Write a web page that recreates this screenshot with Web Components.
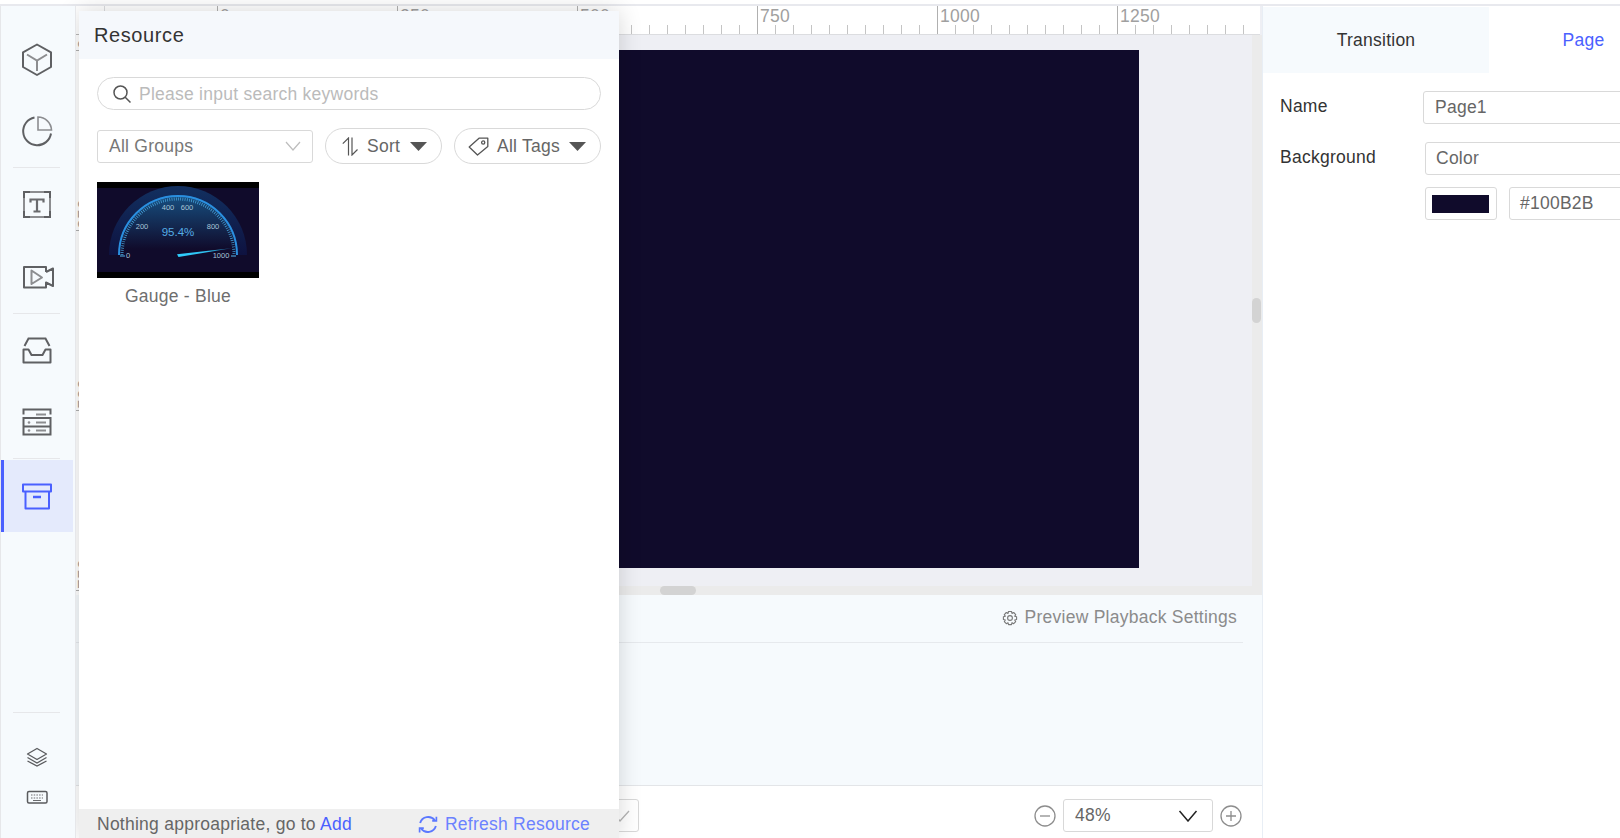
<!DOCTYPE html>
<html><head><meta charset="utf-8"><title>Resource</title>
<style>
html,body{margin:0;padding:0;width:1620px;height:838px;overflow:hidden;background:#fff;font-family:"Liberation Sans",Arial,sans-serif;font-size:17.5px;color:#666;letter-spacing:.25px}
</style></head><body>
<app-shell>
  <side-rail slot="rail">
    <rail-item><svg viewBox="19 41 36 36" fill="none"><path d="M37 44.5 51 52.3V67L37 75 23 67V52.3Z" stroke="#5f6063" stroke-width="2" stroke-linejoin="round"/><path d="M27 54.5 37 60.5 47 54.5M37 60.5V71" stroke="#8c8d90" stroke-width="2"/></svg></rail-item>
    <rail-item><svg viewBox="19 113 36 36" fill="none"><path d="M34.5 117.5A14 14 0 1 0 51 133.5" stroke="#5f6063" stroke-width="2"/><path d="M38 117A13.6 13.6 0 0 1 51.5 130H38Z" stroke="#8c8d90" stroke-width="1.6"/></svg></rail-item>
    <rail-sep class="gap"></rail-sep>
    <rail-item><svg viewBox="19 187 36 36" fill="none"><rect x="24" y="192" width="26" height="25" stroke="#8c8d90" stroke-width="2"/><path d="M30 192H24V198M44 192H50V198M30 217H24V211M44 217H50V211" stroke="#5f6063" stroke-width="2"/><path d="M30.500 202.500V199.500H43.500V202.500M37 199.500V211.500M33.500 211.500H40.500" stroke="#6a6b6e" stroke-width="2.200"/></svg></rail-item>
    <rail-item><svg viewBox="19 259 36 36" fill="none"><path d="M46 272V267H24V287.500H46V282.500L53 286V268.500L46 272" stroke="#5f6063" stroke-width="2" stroke-linejoin="round"/><path d="M31.500 270.500 42 277.500 31.500 284Z" stroke="#8c8d90" stroke-width="2" stroke-linejoin="round"/></svg></rail-item>
    <rail-sep></rail-sep>
    <rail-item><svg viewBox="19 332 36 36" fill="none"><path d="M24.500 346 28.500 338.500H45.500L49.500 346" stroke="#5f6063" stroke-width="2"/><path d="M23.500 349.500H28.500L31.500 355H42.500L45.500 349.500H50.500V362.500H23.500Z" stroke="#5f6063" stroke-width="2" stroke-linejoin="round"/></svg></rail-item>
    <rail-item><svg viewBox="19 404 36 36" fill="none"><path d="M23.500 414.500V409.500H50.500V414.500M23.500 418H50.500V434.500H23.500ZM23.500 426.500H50.500" stroke="#5f6063" stroke-width="2"/><path d="M36 414.500H46M36 422.500H46M36 430.500H46" stroke="#8c8d90" stroke-width="2"/><circle cx="29" cy="422.500" r="1.300" fill="#8c8d90"/><circle cx="29" cy="430.500" r="1.300" fill="#8c8d90"/></svg></rail-item>
    <rail-sep></rail-sep>
    <rail-item active><svg viewBox="19 477 36 36" fill="none"><path d="M23 483.500H51V490.500H23ZM25.500 490.500V507.500H49V490.500" stroke="#4a60ff" stroke-width="2" stroke-linejoin="round"/><path d="M33 496H41" stroke="#4a60ff" stroke-width="2.500"/></svg></rail-item>
    <rail-foot>
      <rail-item small><svg viewBox="19 739 36 36" fill="none"><path d="M37 749.500 46.500 755 37 760.500 27.500 755Z" stroke="#5a5b5e" stroke-width="1.300" stroke-linejoin="round"/><path d="M27.500 758.500 37 764 46.500 758.500M27.500 762 37 767 46.500 762" stroke="#5a5b5e" stroke-width="1.300"/></svg></rail-item>
      <rail-item small class="kb"><svg viewBox="19 779 36 36" fill="none"><rect x="27.500" y="791.500" width="19.500" height="11.500" rx="1.500" stroke="#5a5b5e" stroke-width="1.500"/><path d="M31 795H43M31 798H43" stroke="#6a6b6e" stroke-width="1.200" stroke-dasharray="1.500 1.200"/><path d="M33 800.500H41" stroke="#6a6b6e" stroke-width="1"/></svg></rail-item>
    </rail-foot>
  </side-rail>

  <work-area slot="center">
    <design-stage></design-stage>
    <preview-bar></preview-bar>
    <zoom-bar></zoom-bar>
    <resource-panel></resource-panel>
  </work-area>

  <prop-panel slot="props"></prop-panel>
</app-shell>

<script>
function def(name, css, html, extra){
  const tpl=document.createElement('template');
  tpl.innerHTML='<style>'+css+'</style>'+html;
  customElements.define(name,class extends HTMLElement{
    constructor(){super();this.attachShadow({mode:'open'}).appendChild(tpl.content.cloneNode(true));if(extra)extra(this.shadowRoot,this);}
  });
}
def('app-shell',`
  :host{display:grid;grid-template-rows:6px 832px;width:1620px;height:838px}
  .top{background:#fff;border-bottom:2px solid #e8e9ee;box-sizing:border-box}
  .main{display:flex;min-height:0}
`,`<div class="top"></div><div class="main"><slot name="rail"></slot><slot name="center"></slot><slot name="props"></slot></div>`);

def('side-rail',`
  :host{display:flex;flex-direction:column;box-sizing:border-box;width:76px;height:832px;padding:17px 2px 22px 0;background:#f6fafd;border-left:1px solid #e6e7ea;border-right:1px solid #e6e7ea;position:relative;z-index:2}
`,`<slot></slot>`);
def('rail-item',`
  :host{display:flex;align-items:center;justify-content:center;height:72px;flex:none;box-sizing:border-box}
  :host([small]){height:39px}
  :host(.kb){height:41px;padding-top:2px}
  :host([active]){background:#e4eafc;border-left:3px solid #4a60ff;padding-right:3px;margin-top:1px}
  ::slotted(svg){width:36px;height:36px;display:block}
`,`<slot></slot>`);
def('rail-sep',`
  :host{display:block;height:1px;flex:none;margin:0 13px 0 12px;background:#e6e7ea}
  :host(.gap){margin-bottom:1px}
`,``);
def('rail-foot',`
  :host{display:block;margin-top:auto;border-top:1px solid #e6e7ea;margin-left:12px;margin-right:13px;padding-top:23px}
  .in{margin:0 -13px 0 -12px}
`,`<div class="in"><slot></slot></div>`);

def('work-area',`
  :host{display:flex;flex-direction:column;width:1186px;height:832px;position:relative;flex:none}
`,`<slot></slot>`);

def('h-ruler',`
  :host{display:flex;box-sizing:border-box;background:#fff;border-bottom:1px solid #dcdde0;overflow:hidden;padding-left:112px;margin-right:2px;height:29px}
  .c{flex:none;width:180px;height:28px;box-sizing:border-box;border-left:1px solid #b0b0b0;padding:0 0 0 2px;font-size:17.500px;line-height:21px;color:#a0a0a0;
     background:repeating-linear-gradient(90deg,transparent 0 17px,#c4c4c4 17px 18px) left bottom/100% 9px no-repeat}
`,``,(r)=>{[0,250,500,750,1000,1250].forEach(v=>{const d=document.createElement('div');d.className='c';d.textContent=v;r.appendChild(d);});});

def('v-ruler',`
  :host{display:flex;flex-direction:column;box-sizing:border-box;background:#fff;border-right:1px solid #dcdde0;overflow:hidden}
  .c{flex:none;height:180px;box-sizing:border-box;border-bottom:1px solid #b0b0b0;position:relative}
  .c.first{height:16px}
  .t{writing-mode:vertical-rl;transform:rotate(180deg);position:absolute;left:0;bottom:1px;font-size:17.500px;line-height:19px;color:#a0a0a0}
`,``,(r)=>{[0,250,500,750].forEach((v,i)=>{const d=document.createElement('div');d.className=i?'c':'c first';const t=document.createElement('span');t.className='t';t.textContent=v;d.appendChild(t);r.appendChild(d);});});

def('design-stage',`
  :host{display:grid;grid-template-columns:29px 1fr;grid-template-rows:29px 560px;height:589px;flex:none;background:#eeeff4}
  .corner{background:#fff;border-right:1px solid #dcdde0;border-bottom:1px solid #b8b8b8;box-sizing:border-box}
  .area{display:grid;grid-template-columns:1fr 10px;grid-template-rows:1fr 9px;min-height:0;min-width:0}
  .stage{padding:15px 0 0 112px;overflow:hidden;min-width:0}
  .page{width:922px;height:518px;background:#100b2b}
  .vt{background:#ebebeb;grid-row:1/3;grid-column:2}
  .vt i{display:block;width:9px;height:25px;margin:263px 0 0 0;background:#d3d3d3;border-radius:5px}
  .ht{background:#ebebeb}
  .ht i{display:block;width:36px;height:9px;margin-left:555px;background:#d3d3d3;border-radius:5px}
`,`<div class="corner"></div><h-ruler></h-ruler><v-ruler></v-ruler>
<div class="area"><div class="stage"><div class="page"></div></div><div class="vt"><i></i></div><div class="ht"><i></i></div></div>`);

def('preview-bar',`
  :host{display:block;box-sizing:border-box;height:191px;flex:none;background:#f6fafd;border-bottom:1px solid #e3e5e8}
  .h{display:flex;justify-content:flex-end;align-items:center;gap:7px;height:48px;box-sizing:border-box;border-bottom:1px solid #e6e9ed;margin-right:19px;padding-right:6px;padding-bottom:2px;color:#8b8b8b;font-size:17.500px}
  svg{width:16px;height:16px;display:block}
`,`<div class="h"><svg viewBox="0 0 16 16" fill="none" stroke="#777" stroke-width="1.100"><path d="M6.500 1.500H9.500L10 3.400 11.700 2.500 13.700 4.600 12.700 6.300 14.600 6.800V9.500L12.700 10 13.700 11.700 11.700 13.700 10 12.700 9.500 14.600H6.500L6 12.700 4.300 13.700 2.300 11.700 3.300 10 1.400 9.500V6.800L3.300 6.300 2.300 4.600 4.300 2.500 6 3.400Z" stroke-linejoin="round"/><circle cx="8" cy="8" r="2.400"/></svg><span>Preview Playback Settings</span></div>`);

def('zoom-bar',`
  :host{display:flex;align-items:center;height:52px;flex:1;background:#fff;box-sizing:border-box;padding:7px 20px 0 465px}
  .part{width:98px;height:33px;box-sizing:border-box;border:1px solid #d8d8d8;border-radius:3px;display:flex;align-items:center;justify-content:flex-end;padding-right:8px}
  .part svg{width:20px;height:12px}
  .sp{flex:1}
  .sel{width:150px;height:33px;box-sizing:border-box;border:1px solid #d8d8d8;border-radius:3px;display:flex;align-items:center;justify-content:space-between;padding:0 14px 0 11px;margin:0 7px;color:#666;font-size:17.500px}
  .sel svg{width:20px;height:12px;display:block}
  .cir{width:22px;height:22px;display:block}
`,`<div class="part"><svg viewBox="0 0 20 12" fill="none" stroke="#b5b5b5" stroke-width="1.300"><path d="M1 1 10 11 19 1"/></svg></div><div class="sp"></div>
<svg class="cir" viewBox="0 0 22 22" fill="none" stroke="#8d8d8d" stroke-width="1.300"><circle cx="11" cy="11" r="10"/><path d="M6 11H16"/></svg>
<div class="sel"><span>48%</span><svg viewBox="0 0 20 12" fill="none" stroke="#222" stroke-width="1.500"><path d="M1.500 1 10 11 18.500 1"/></svg></div>
<svg class="cir" viewBox="0 0 22 22" fill="none" stroke="#8d8d8d" stroke-width="1.300"><circle cx="11" cy="11" r="10"/><path d="M6 11H16M11 6V16"/></svg>`);

def('round-pill',`
  :host{display:flex;align-items:center;box-sizing:border-box;height:36px;border:1px solid #d9d9d9;border-radius:18px;background:#fff;color:#666;font-size:17.500px;flex:none}
`,`<slot></slot>`);

def('gauge-thumb',`
  :host{display:block;width:162px}
  svg{display:block;width:162px;height:96px;letter-spacing:0}
  .l{text-align:center;margin-top:8px;line-height:20px;font-size:17.500px;color:#6e6e6e}
`,`<svg viewBox="0 0 162 96" font-family="'Liberation Sans',Arial,sans-serif">
<defs><linearGradient id="g" x1="0" y1="0" x2="0" y2="1"><stop offset="0" stop-color="#174f80"/><stop offset=".9" stop-color="#100b2b"/></linearGradient>
<linearGradient id="n" x1="0" y1="0" x2="1" y2="0"><stop offset="0" stop-color="#2fd0ff"/><stop offset=".55" stop-color="#2fc0f0"/><stop offset="1" stop-color="#1a3f70"/></linearGradient>
<linearGradient id="o" x1="0" y1="0" x2="0" y2="1"><stop offset="0" stop-color="#123060"/><stop offset="1" stop-color="#0e1240"/></linearGradient></defs>
<rect width="162" height="96" fill="#000"/><rect y="6" width="162" height="84" fill="#100b2b"/>
<path d="M12 73A69 69 0 0 1 150 73Z" fill="url(#o)"/>
<path d="M21 73A60 60 0 0 1 141 73Z" fill="url(#g)"/>
<path d="M22 73A59 59 0 0 1 140 73" fill="none" stroke="#2a8fe0" stroke-width="2"/>
<path d="M25 73A56 56 0 0 1 137 73" fill="none" stroke="#4aa8e0" stroke-width="3" stroke-dasharray=".7 1.500"/>
<path d="M23 74H28M134 74H139" stroke="#55b8f0" stroke-width="1"/>
<g font-size="7.500" fill="#a9c6d8" text-anchor="middle"><text x="31" y="75.700">0</text><text x="45" y="46.700">200</text><text x="71" y="27.700">400</text><text x="90" y="27.700">600</text><text x="116" y="46.700">800</text><text x="124" y="75.700">1000</text></g>
<text x="81" y="54" font-size="11.500" fill="#55ade6" text-anchor="middle">95.4%</text>
<path d="M80 72.200 81.500 75 136 66Z" fill="url(#n)"/>
</svg><div class="l">Gauge - Blue</div>`);

def('resource-panel',`
  :host{position:absolute;left:3px;top:5px;bottom:0;width:540px;display:flex;flex-direction:column;background:#fff;box-shadow:0 0 22px rgba(0,0,0,.16);z-index:1}
  .hd{height:48px;flex:none;background:#f5f8fc;box-sizing:border-box;padding-left:15px;display:flex;align-items:center;font-size:20px;letter-spacing:.6px;color:#333}
  .bd{flex:1;padding:18px 18px 0;min-height:0}
  .search{display:flex;align-items:center;height:33px;box-sizing:border-box;border:1px solid #d9d9d9;border-radius:17px;padding-left:14px;gap:7px;color:#bbb;font-size:17.500px}
  .search span{margin-top:2px}
  .search svg{width:20px;height:20px;display:block;flex:none}
  .row{display:flex;align-items:center;gap:12px;margin-top:18px;height:36px}
  .sel{width:216px;height:33px;box-sizing:border-box;border:1px solid #d9d9d9;border-radius:3px;display:flex;align-items:center;justify-content:space-between;padding:0 11px;color:#777;flex:none;font-size:17.500px}
  .sel svg{width:16px;height:10px;display:block}
  .sort{width:117px;padding-left:16px}
  .tags{width:147px;padding-left:13px}
  round-pill svg{display:block;flex:none}
  .caret{width:17px;height:9px}
  gauge-thumb{margin-top:18px}
  .ft{height:29px;box-sizing:border-box;flex:none;background:#efefef;display:flex;align-items:center;justify-content:space-between;padding:2px 29px 0 18px;font-size:17.500px;color:#666}
  .ft a{color:#4a60ff;text-decoration:none}
  .ref{display:flex;align-items:center;gap:5px;color:#6b82ff}
  .ref svg{width:24px;height:21px;display:block}
`,`<div class="hd">Resource</div>
<div class="bd">
  <div class="search"><svg viewBox="0 0 20 20" fill="none" stroke="#555" stroke-width="1.500"><circle cx="8.500" cy="8.500" r="6.500"/><path d="M13.200 13.200 18.500 18.500"/></svg><span>Please input search keywords</span></div>
  <div class="row">
    <div class="sel"><span>All Groups</span><svg viewBox="0 0 16 10" fill="none" stroke="#bdbdbd" stroke-width="1.200"><path d="M1 1 8 9 15 1"/></svg></div>
    <round-pill class="sort"><svg width="16" height="19" viewBox="0 0 16 19" fill="none" stroke="#555" stroke-width="1.200"><path d="M6.500 18.500V1L.8 6.700M10 .5V18L15.500 12.500"/></svg><span style="margin:0 10px 0 9px">Sort</span><svg class="caret" viewBox="0 0 17 9"><path d="M0 0H17L8.500 9Z" fill="#555"/></svg></round-pill>
    <round-pill class="tags"><svg width="21" height="19" viewBox="0 0 21 19" fill="none" stroke="#555" stroke-width="1.300" stroke-linejoin="round"><path d="M11 1.200H19.800V9.500L9.500 18 1.200 10Z"/><circle cx="15.200" cy="5.500" r="1.600"/></svg><span style="margin:0 9px 0 8px">All Tags</span><svg class="caret" viewBox="0 0 17 9"><path d="M0 0H17L8.500 9Z" fill="#555"/></svg></round-pill>
  </div>
  <gauge-thumb></gauge-thumb>
</div>
<div class="ft"><span>Nothing approapriate, go to <a>Add</a></span><span class="ref"><svg viewBox="0 0 22 20" fill="none" stroke="#5b78ff" stroke-width="1.800"><path d="M3.500 8.500A8 8 0 0 1 17.500 6M18.500 11.500A8 8 0 0 1 4.500 14"/><path d="M15 6.500H19V2.500M7 13.500H3V17.500" stroke-width="1.600"/></svg><span>Refresh Resource</span></span></div>`);

def('prop-panel',`
  :host{display:block;width:358px;height:832px;box-sizing:border-box;border-left:1px solid #e8eef5;background:#fff;overflow:hidden;flex:none;color:#333;font-size:17.500px}
  .tabs{display:flex;height:67px;width:420px;padding-top:1px;box-sizing:border-box}
  .t{width:226px;flex:none;display:flex;align-items:center;justify-content:center;background:#f6fafd;color:#333}
  .t.on{width:189px;background:#fff;color:#4a60ff}
  .f{display:grid;grid-template-columns:143px auto 1fr;position:relative;padding:18px 0 0 17px;row-gap:18px;width:520px;box-sizing:border-box}
  .f .lab{line-height:33px;margin-top:-1px}
  .box{height:33px;box-sizing:border-box;border:1px solid #d9d9d9;border-radius:3px;display:flex;align-items:center;padding-left:11px;color:#666;background:#fff;font-size:17.500px}
  .wide{grid-column:2/4;width:300px}
  .bgf{margin-left:2px;padding-left:10px}
  .col{grid-column:2/4;display:flex;gap:12px;margin:-6px 0 0 2px}
  .sw{width:72px;padding:0 0 0 6px}
  .sw i{display:block;width:57px;height:18px;background:#100b2b}
  .hex{width:200px;padding-left:10px}
`,`<div class="tabs"><div class="t">Transition</div><div class="t on">Page</div></div>
<div class="f">
  <div class="lab">Name</div><div class="box wide">Page1</div>
  <div class="lab">Background</div><div class="box wide bgf">Color</div>
  <div class="col"><div class="box sw"><i></i></div><div class="box hex">#100B2B</div></div>
</div>`);
</script>
</body></html>
